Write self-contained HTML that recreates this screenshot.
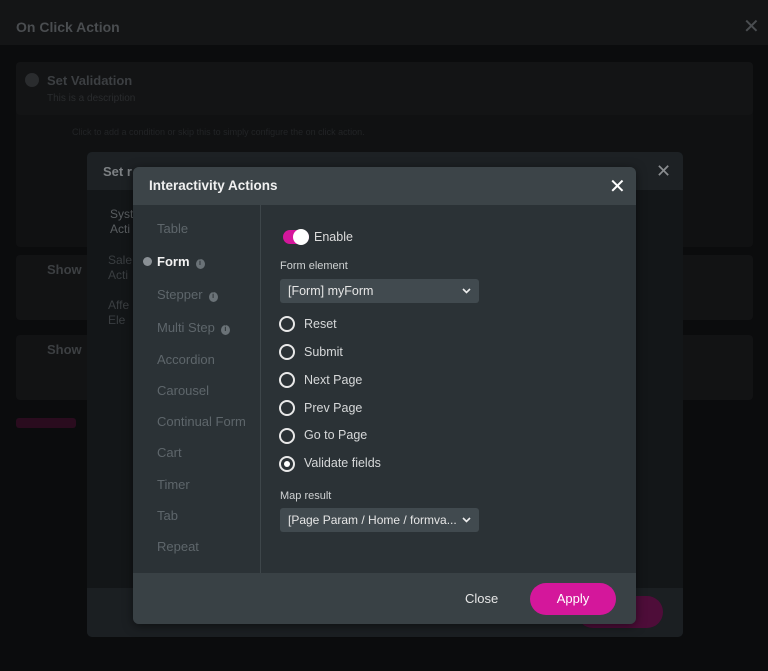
<!DOCTYPE html>
<html style="background:#0b0c0d"><head><style>
*{margin:0;padding:0;box-sizing:border-box}
body{width:768px;height:671px;overflow:hidden;background:#0b0c0d;font-family:"Liberation Sans",sans-serif;position:relative;color:#ddd}
.a{position:absolute}
.side{position:absolute;left:157px;font-size:13px;color:#5e666b}
.radio{position:absolute;left:279px;width:16px;height:16px;border:2px solid #e8e8e8;border-radius:50%}
.rl{position:absolute;left:304px;font-size:12.5px;color:#d6d8d9}
.dd{position:absolute;left:280px;width:199px;height:24px;background:#414a4f;border-radius:3px;font-size:12.5px;color:#e6e6e6;padding:5px 8px}
.dd svg{position:absolute;right:8px;top:9px}
.info{display:inline-block;width:9px;height:10px;border-radius:50%;background:#6a7277;vertical-align:1px;margin-left:6px;font-size:7px;color:#2b3236;text-align:center;line-height:10px;font-weight:bold}
</style></head><body>
<div class="a" style="left:0;top:0;width:768px;height:45px;background:#141516"></div>
<div class="a" style="left:16px;top:19px;font-size:14px;color:#4a4d50;font-weight:bold">On Click Action</div>
<div class="a" style="left:743px;top:14px;font-size:20px;color:#4a4d50">✕</div>
<div class="a" style="left:16px;top:62px;width:737px;height:185px;background:#101112;border-radius:4px"></div>
<div class="a" style="left:16px;top:62px;width:737px;height:53px;background:#131415;border-radius:4px"></div>
<div class="a" style="left:25px;top:73px;width:14px;height:14px;border-radius:50%;background:#2a2c2e"></div>
<div class="a" style="left:47px;top:73px;font-size:13px;color:#3c3f42;font-weight:bold">Set Validation</div>
<div class="a" style="left:47px;top:93px;font-size:10px;color:#2a2c2e">This is a description</div>
<div class="a" style="left:72px;top:127px;font-size:9px;color:#222426">Click to add a condition or skip this to simply configure the on click action.</div>
<div class="a" style="left:16px;top:255px;width:737px;height:65px;background:#121314;border-radius:4px"></div>
<div class="a" style="left:47px;top:262px;font-size:13px;color:#3c3f42;font-weight:bold">Show</div>
<div class="a" style="left:16px;top:335px;width:737px;height:65px;background:#121314;border-radius:4px"></div>
<div class="a" style="left:47px;top:342px;font-size:13px;color:#3c3f42;font-weight:bold">Show</div>
<div class="a" style="left:16px;top:418px;width:60px;height:10px;background:#2a0c1e;border-radius:3px"></div>
<!-- middle modal -->
<div class="a" style="left:87px;top:152px;width:596px;height:485px;background:#131618;border-radius:5px;overflow:hidden">
<div style="height:38px;background:#1d2124"></div>
<div class="a" style="left:0;top:436px;width:596px;height:49px;background:#1b1f22"></div>
<div class="a" style="left:490px;top:444px;width:86px;height:32px;background:#4e0d39;border-radius:16px"></div>
</div>
<div class="a" style="left:103px;top:164px;font-size:13px;color:#7d8184;font-weight:bold">Set r</div>
<div class="a" style="left:656px;top:161px;font-size:18px;color:#8a8d90">✕</div>
<div class="a" style="left:110px;top:207px;font-size:12px;color:#5a5e61;line-height:15px">Syst<br>Acti</div>
<div class="a" style="left:108px;top:253px;font-size:12px;color:#3a3e41;line-height:15px">Sale<br>Acti<br><br>Affe<br>Ele</div>
<!-- front modal -->
<div class="a" style="left:133px;top:167px;width:503px;height:457px;background:#2b3236;border-radius:6px;overflow:hidden;box-shadow:0 2px 10px rgba(0,0,0,.5)">
<div style="height:38px;background:#3c4448"></div>
<div class="a" style="left:127px;top:38px;width:1px;height:368px;background:#3e464a"></div>
<div class="a" style="left:0;top:406px;width:503px;height:51px;background:#394145"></div>
</div>
<div class="a" style="left:149px;top:178px;font-size:13.5px;color:#f0f0f0;font-weight:bold">Interactivity Actions</div>
<div class="a" style="left:609px;top:174px;font-size:20px;color:#fff">✕</div>
<div class="side" style="top:221px">Table</div>
<div class="a" style="left:143px;top:257px;width:9px;height:9px;border-radius:50%;background:#8a9095"></div>
<div class="side" style="top:254px;color:#f2f2f2;font-weight:bold">Form<span class="info">i</span></div>
<div class="side" style="top:287px">Stepper<span class="info">i</span></div>
<div class="side" style="top:320px">Multi Step<span class="info">i</span></div>
<div class="side" style="top:352px">Accordion</div>
<div class="side" style="top:383px">Carousel</div>
<div class="side" style="top:414px">Continual Form</div>
<div class="side" style="top:445px">Cart</div>
<div class="side" style="top:477px">Timer</div>
<div class="side" style="top:508px">Tab</div>
<div class="side" style="top:539px">Repeat</div>
<div class="a" style="left:283px;top:230px;width:26px;height:14px;border-radius:7px;background:#d4179b"></div>
<div class="a" style="left:293px;top:229px;width:16px;height:16px;border-radius:50%;background:#fff"></div>
<div class="a" style="left:314px;top:230px;font-size:12.5px;color:#dcdcdc">Enable</div>
<div class="a" style="left:280px;top:260px;font-size:11px;color:#cfd2d3">Form element</div>
<div class="dd" style="top:279px">[Form] myForm<svg width="9" height="6"><path d="M1 1l3.5 3.5L8 1" stroke="#eee" stroke-width="1.6" fill="none"/></svg></div>
<div class="radio" style="top:316px"></div><div class="rl" style="top:317px">Reset</div>
<div class="radio" style="top:344px"></div><div class="rl" style="top:345px">Submit</div>
<div class="radio" style="top:372px"></div><div class="rl" style="top:373px">Next Page</div>
<div class="radio" style="top:400px"></div><div class="rl" style="top:401px">Prev Page</div>
<div class="radio" style="top:428px"></div><div class="rl" style="top:428px">Go to Page</div>
<div class="radio" style="top:456px"><div style="position:absolute;left:3px;top:3px;width:6px;height:6px;border-radius:50%;background:#fff"></div></div><div class="rl" style="top:456px">Validate fields</div>
<div class="a" style="left:280px;top:490px;font-size:11px;color:#cfd2d3">Map result</div>
<div class="dd" style="top:508px;font-size:12px">[Page Param / Home / formva...<svg width="9" height="6"><path d="M1 1l3.5 3.5L8 1" stroke="#eee" stroke-width="1.6" fill="none"/></svg></div>
<div class="a" style="left:465px;top:591px;font-size:13px;color:#e6e6e6">Close</div>
<div class="a" style="left:530px;top:583px;width:86px;height:32px;background:#d4179b;border-radius:16px;font-size:13px;color:#fff;text-align:center;line-height:32px">Apply</div>
</body></html>
